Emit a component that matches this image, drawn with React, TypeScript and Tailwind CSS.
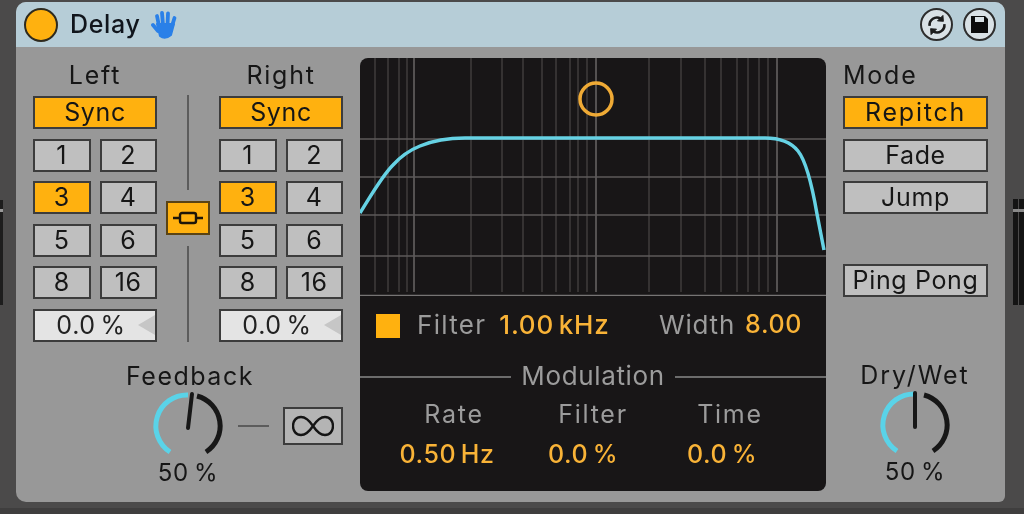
import { clsx } from "clsx";

const font = "font-['Inter','Liberation_Sans',sans-serif]";

const hLines = [139, 177, 215, 256];
const vLines = [375, 388, 399, 407, 471, 502, 523, 542, 556, 570, 578, 587, 649, 681, 705, 721, 737, 748, 759, 768];
const bright = [414, 596, 777];

function Btn({ label, on, className }: { label: string; on?: boolean; className?: string }) {
  return (
    <div
      className={clsx(
        "flex h-[33px] items-center justify-center border-2 border-[#3c3c3c] text-[25px] leading-none text-[#161616]",
        on ? "bg-[#ffb10f]" : "bg-[#bfbfbf]",
        className
      )}
    >
      {label}
    </div>
  );
}

function DelayColumn({ title }: { title: string }) {
  return (
    <div className="w-[124px]">
      <div className="flex h-[38px] items-center justify-center pb-[2px] text-[25px] tracking-[0.07em] text-[#161616]">{title}</div>
      <div className="grid grid-cols-2 gap-x-[9px] gap-y-[9.5px]">
        <Btn label="Sync" on className="col-span-2" />
        <Btn label="1" />
        <Btn label="2" />
        <Btn label="3" on />
        <Btn label="4" />
        <Btn label="5" />
        <Btn label="6" />
        <Btn label="8" />
        <Btn label="16" />
        <div className="relative col-span-2 flex h-[33px] items-center justify-center border-2 border-[#3c3c3c] bg-[#e4e4e4] pr-[8px] text-[25px] leading-none text-[#222] [word-spacing:-3px]">
          0.0 %
          <div className="absolute right-0 top-[4px] h-0 w-0 border-y-[10px] border-r-[17px] border-y-transparent border-r-[#c6c6c6]" />
        </div>
      </div>
    </div>
  );
}

function Knob({ needleX }: { needleX: number }) {
  return (
    <svg width="80" height="72" viewBox="0 0 80 72" fill="none" strokeWidth="5">
      <path d="M22 61 A31 31 0 0 1 40 4" stroke="#5ad3e8" />
      <path d="M49 5 A31 31 0 0 1 58 61" stroke="#171717" />
      <line x1="40" y1="37" x2={needleX} y2="3" stroke="#171717" strokeWidth="4" strokeLinecap="round" />
    </svg>
  );
}

function Graph() {
  return (
    <svg className="block h-[238px] w-[466px]" viewBox="360 58 466 238">
      {vLines.map((x) => (
        <line key={x} x1={x} x2={x} y1="58" y2="292" stroke="#3f3d3d" strokeWidth="1.5" />
      ))}
      {bright.map((x) => (
        <line key={x} x1={x} x2={x} y1="58" y2="292" stroke="#686666" strokeWidth="1.5" />
      ))}
      {hLines.map((y) => (
        <line key={y} x1="360" x2="826" y1={y} y2={y} stroke="#5c5a5a" strokeWidth="1.5" />
      ))}
      <line x1="360" x2="826" y1="295.5" y2="295.5" stroke="#767474" strokeWidth="1.5" />
      <circle cx="596" cy="99" r="16" fill="none" stroke="#efaa35" strokeWidth="3.5" />
      <path
        d="M360 213 C372 194 382 176 393 165 C402 155 410 150 420 146 C432 141 446 138 465 138 L765 138 C778 138 790 141 798 151 C806 161 812 185 817 214 C820 230 822 240 824 250"
        fill="none"
        stroke="#66d2e4"
        strokeWidth="3.5"
      />
    </svg>
  );
}

function HandIcon() {
  return (
    <svg width="26" height="30" viewBox="0 0 26 30" fill="none" stroke="#2a80e8" strokeLinecap="round">
      <path d="M8 16 L6 6" strokeWidth="3.8" />
      <path d="M12 15 L11 3" strokeWidth="3.8" />
      <path d="M16.5 15 L17 3.5" strokeWidth="3.8" />
      <path d="M21 16 L23.5 8" strokeWidth="3.8" />
      <path d="M7 21 L2 15" strokeWidth="3.8" />
      <path d="M6 14 H23 L20 25 Q14 30 9 26 Z" fill="#2a80e8" strokeWidth="2" strokeLinejoin="round" />
    </svg>
  );
}

function RoundIcon({ children }: { children: React.ReactNode }) {
  return (
    <div className="flex h-[33px] w-[33px] items-center justify-center rounded-full border-2 border-[#2e2e2e] bg-[#d9e1e5]">
      {children}
    </div>
  );
}

export default function App() {
  return (
    <div className={clsx("relative h-[514px] w-[1024px] overflow-hidden bg-[#4b4a4a] pt-[2px] pl-[16px] tracking-[0.04em] blur-[0.4px]", font)}>
      <div className="absolute left-0 top-[200px] h-[105px] w-[3px] bg-[#1d1d1d]" />
      <div className="absolute left-0 top-[209px] h-[3px] w-[3px] bg-[#9a9a9a]" />
      <div className="absolute left-[1013px] top-[199px] h-[106px] w-[5px] bg-[#141414]" />
      <div className="absolute left-[1019px] top-[199px] h-[106px] w-[5px] bg-[#141414]" />
      <div className="absolute left-[1013px] top-[209px] h-[3px] w-[11px] bg-[#8a8a8a]" />
      <div className="absolute bottom-0 left-0 h-[6px] w-full bg-[#3f3e3e]" />

      <div className="relative w-[989px] overflow-hidden rounded-tl-[10px] rounded-tr-[10px] rounded-bl-[10px] rounded-br-[6px] bg-[#989898]">
        {/* title bar */}
        <div className="flex h-[45px] items-center bg-[#b6cdd7] pl-[8px] pr-[9px]">
          <div className="h-[34px] w-[34px] rounded-full border-2 border-[#2e2a1e] bg-[#ffb10f]" />
          <span className="ml-[12px] text-[25px] font-medium text-[#10151c]">Delay</span>
          <span className="ml-[11px]">
            <HandIcon />
          </span>
          <div className="ml-auto flex gap-[10px]">
            <RoundIcon>
              <svg width="22" height="22" viewBox="0 0 24 24" fill="none" stroke="#1c1c1c" strokeWidth="2.8">
                <path d="M4 13 A8 8 0 0 1 16 5" />
                <path d="M20 11 A8 8 0 0 1 8 19" />
                <path d="M18.5 1.5 L19 8 L12.5 7.5 Z" fill="#1c1c1c" strokeWidth="1" />
                <path d="M5.5 22.5 L5 16 L11.5 16.5 Z" fill="#1c1c1c" strokeWidth="1" />
              </svg>
            </RoundIcon>
            <RoundIcon>
              <svg width="19" height="19" viewBox="0 0 19 19">
                <path d="M1 1 H15 L18 4 V18 H1 Z" fill="#0c0c0c" />
                <rect x="5" y="2" width="9" height="5" fill="#d9e1e5" />
              </svg>
            </RoundIcon>
          </div>
        </div>

        {/* device body */}
        <div className="flex h-[455px] gap-[17px] px-[17px] pt-[11px]">
          <div className="w-[310px]">
            <div className="flex">
              <DelayColumn title="Left" />
              <div className="flex w-[62px] flex-col items-center pt-[37px]">
                <div className="h-[95px] w-[2px] bg-[#5c5c5c]" />
                <div className="my-[11px] flex h-[34px] w-[44px] items-center justify-center border-2 border-[#5a4313] bg-[#ffb10f]">
                  <svg width="30" height="14" viewBox="0 0 30 14" fill="none" stroke="#1d1608" strokeWidth="2.4">
                    <path d="M0 7 H7 M23 7 H30" />
                    <rect x="7" y="2" width="16" height="10" rx="2" />
                  </svg>
                </div>
                <div className="h-[96px] w-[2px] bg-[#5c5c5c]" />
              </div>
              <DelayColumn title="Right" />
            </div>

            <div className="mt-[19px] flex">
              <div className="ml-[95px] flex w-[120px] shrink-0 flex-col items-center">
                <div className="ml-[4px] flex h-[30px] items-center whitespace-nowrap text-[25px] leading-none tracking-[0.06em] text-[#161616]">Feedback</div>
                <Knob needleX={44} />
                <div className="mt-[-3px] text-[24px] leading-[26px] text-[#161616] [word-spacing:-2px]">50 %</div>
              </div>
              <div className="mt-[46px] flex h-[38px] shrink-0 items-center">
                <div className="ml-[-10px] h-[2px] w-[31px] bg-[#5c5c5c]" />
                <div className="ml-[14px] flex h-[38px] w-[60px] items-center justify-center border-2 border-[#3c3c3c] bg-[#b4b4b4]">
                  <svg width="42" height="22" viewBox="0 0 42 22" fill="none" stroke="#141414" strokeWidth="2.4">
                    <path d="M21 11 C17 5 13 2 9 2 C4 2 1 6 1 11 C1 16 4 20 9 20 C13 20 17 17 21 11 C25 5 29 2 33 2 C38 2 41 6 41 11 C41 16 38 20 33 20 C29 20 25 17 21 11 Z" />
                  </svg>
                </div>
              </div>
            </div>
          </div>

          {/* display */}
          <div className="h-[433px] w-[466px] overflow-hidden rounded-[8px] bg-[#181617] text-[#9c9c9c]">
            <Graph />
            <div className="flex h-[60px] items-center pb-[3px] pl-[16px] pr-[24px] text-[26px]">
              <div className="mt-[3px] h-[24px] w-[24px] bg-[#ffb10f]" />
              <span className="ml-[17px] tracking-[0.05em]">Filter</span>
              <span className="ml-[13px] font-medium tracking-[0.03em] text-[#f9b337] [word-spacing:-3px]">1.00 kHz</span>
              <span className="ml-auto tracking-[0.03em]">Width</span>
              <span className="ml-[10px] text-[25px] font-medium text-[#f9b337]">8.00</span>
            </div>
            <div className="flex h-[42px] items-center">
              <div className="h-[2px] flex-1 bg-[#6c6c6c]" />
              <span className="mx-[10px] pb-[3px] text-[26px]">Modulation</span>
              <div className="h-[2px] flex-1 bg-[#6c6c6c]" />
            </div>
            <div className="flex pl-[29px] pt-[1px] text-[25px]">
              {[
                ["Rate", "0.50 Hz", "w-[130px]", "mr-[14px]"],
                ["Filter", "0.0 %", "ml-[9px] w-[130px]", "mr-[20px]"],
                ["Time", "0.0 %", "ml-[7px] w-[130px]", "mr-[16px]"],
              ].map(([name, value, col, shift]) => (
                <div key={name} className={clsx("flex flex-col items-center", col)}>
                  <span className="leading-[30px] tracking-[0.07em]">{name}</span>
                  <span className={clsx("mt-[10px] font-medium leading-[30px] text-[#f9b337] [word-spacing:-3px]", shift)}>{value}</span>
                </div>
              ))}
            </div>
          </div>

          {/* mode */}
          <div className="w-[145px]">
            <div className="flex h-[38px] items-center pb-[2px] text-[25px] tracking-[0.07em] text-[#161616]">Mode</div>
            <div className="flex flex-col gap-[9.5px]">
              <Btn label="Repitch" on className="tracking-[0.07em]" />
              <Btn label="Fade" />
              <Btn label="Jump" />
              <Btn label="Ping Pong" className="mt-[40px]" />
            </div>
            <div className="ml-[-1px] mt-[63px] flex flex-col items-center">
              <div className="flex h-[32px] items-center text-[25px] leading-none tracking-[0.08em] text-[#161616]">Dry/Wet</div>
              <div className="mt-[-2px]">
                <Knob needleX={40} />
              </div>
              <div className="mt-[-3px] text-[24px] leading-[26px] text-[#161616] [word-spacing:-2px]">50 %</div>
            </div>
          </div>
        </div>
      </div>
    </div>
  );
}
